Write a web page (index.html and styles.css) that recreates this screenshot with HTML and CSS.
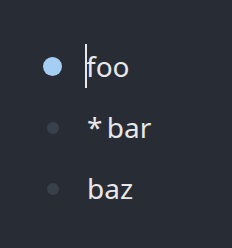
FILE: index.html
```html
<!DOCTYPE html>
<html lang="en">
<head>
    <meta charset="UTF-8">
    <title>Outline</title>
    <link rel="stylesheet" href="styles.css">
</head>
<body>
    <ul class="outline">
        <li class="item active">
            <span class="bullet"></span>
            <span class="text"><span class="caret"></span>foo</span>
        </li>
        <li class="item">
            <span class="bullet"></span>
            <span class="text">* bar</span>
        </li>
        <li class="item">
            <span class="bullet"></span>
            <span class="text">baz</span>
        </li>
    </ul>
</body>
</html>
```

FILE: styles.css
```css
* {
    margin: 0;
    padding: 0;
    box-sizing: border-box;
}

html, body {
    height: 100%;
}

body {
    background-color: #272c35;
    font-family: "Noto Sans", sans-serif;
}

.outline {
    list-style: none;
    padding: 36px 0 0 34px;
}

.item {
    display: flex;
    align-items: center;
    height: 61px;
}

.bullet {
    width: 12px;
    height: 12px;
    border-radius: 50%;
    background-color: #38414b;
    margin: 0 28px 0 13px;
}

.active .bullet {
    width: 19px;
    height: 19px;
    background-color: #a4cff2;
    margin: 0 24px 0 9px;
}

.text {
    position: relative;
    color: #e8e8e8;
    font-size: 28px;
    line-height: 61px;
    word-spacing: -3px;
}

.caret {
    position: absolute;
    left: -1px;
    top: 8px;
    width: 2px;
    height: 44px;
    background-color: #e8e8e8;
}
```
